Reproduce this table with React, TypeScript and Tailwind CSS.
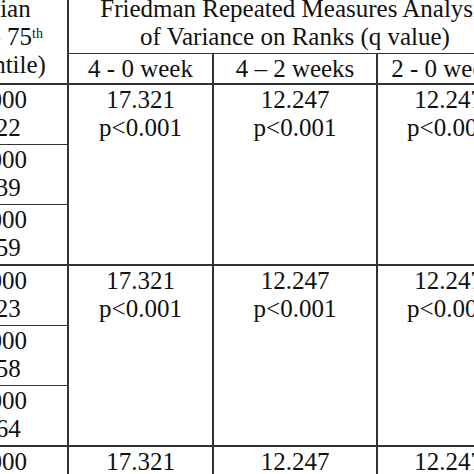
import React from 'react';

const groups = [
  { q: ['17.321', '12.247', '12.247'], left: ['9.022', '9.039', '9.059'] },
  { q: ['17.321', '12.247', '12.247'], left: ['9.023', '9.058', '9.064'] },
  { q: ['17.321', '12.247', '12.247'], left: ['9.031', '9.047', '9.062'] },
];

const line = 'border-[#333]';

const App = () => {
  return (
    <div
      className="w-[474px] h-[474px] overflow-hidden bg-white text-[#111] text-[25px] leading-[28px]"
      style={{ fontFamily: '"Liberation Serif", "Times New Roman", serif' }}
    >
      <div className="ml-[-82px] mt-[-6px] grid w-[603px] grid-cols-[151px_145px_164px_143px] grid-rows-[60px_31px_60px_60px_61px_60px_60px_61px_60px_60px_61px] text-center">
        {/* Header */}
        <div className={`row-span-2 border-r-2 border-b-2 ${line} pt-px`}>
          <div>Median</div>
          <div>
            (25<sup className="text-[14px]">th</sup> - 75<sup className="text-[14px]">th</sup>
          </div>
          <div>percentile)</div>
        </div>
        <div className={`col-span-3 border-b ${line} pt-px`}>
          <div>Friedman Repeated Measures Analysis</div>
          <div>of Variance on Ranks (q value)</div>
        </div>
        <div className={`border-r-2 border-b-2 ${line} pt-px`}>4 - 0 week</div>
        <div className={`border-r-2 border-b-2 ${line} pt-px`}>4 – 2 weeks</div>
        <div className={`border-r-2 border-b-2 ${line} pt-px`}>2 - 0 weeks</div>

        {/* Body */}
        {groups.map((g, gi) => (
          <React.Fragment key={gi}>
            <div className={`border-r-2 border-b ${line} pt-px`}>
              <div>10.000</div>
              <div>{g.left[0]}</div>
            </div>
            {g.q.map((v, i) => (
              <div key={i} className={`row-span-3 border-r-2 border-b-2 ${line} pt-px`}>
                <div>{v}</div>
                <div>p&lt;0.001</div>
              </div>
            ))}
            <div className={`border-r-2 border-b ${line} pt-px`}>
              <div>10.000</div>
              <div>{g.left[1]}</div>
            </div>
            <div className={`border-r-2 border-b-2 ${line} pt-px`}>
              <div>10.000</div>
              <div>{g.left[2]}</div>
            </div>
          </React.Fragment>
        ))}
      </div>
    </div>
  );
};

export default App;
